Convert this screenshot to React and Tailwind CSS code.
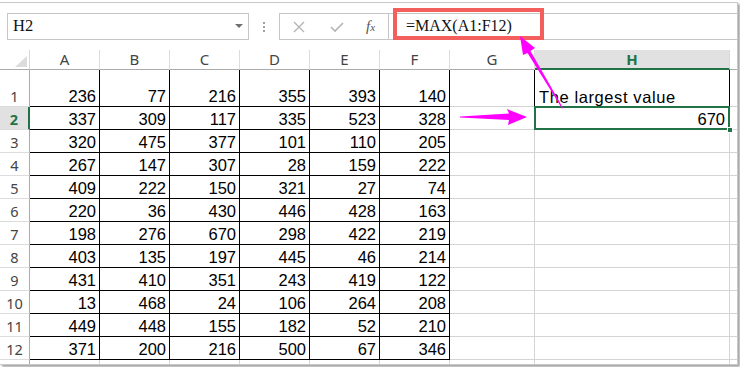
import React from "react";

const data = [
  [236, 77, 216, 355, 393, 140],
  [337, 309, 117, 335, 523, 328],
  [320, 475, 377, 101, 110, 205],
  [267, 147, 307, 28, 159, 222],
  [409, 222, 150, 321, 27, 74],
  [220, 36, 430, 446, 428, 163],
  [198, 276, 670, 298, 422, 219],
  [403, 135, 197, 445, 46, 214],
  [431, 410, 351, 243, 419, 122],
  [13, 468, 24, 106, 264, 208],
  [449, 448, 155, 182, 52, 210],
  [371, 200, 216, 500, 67, 346],
];

const cols = ["A", "B", "C", "D", "E", "F", "G", "H"];
const sans = { fontFamily: '"Liberation Sans", Arial, sans-serif' };
const ui = { fontFamily: '"Noto Sans", "Open Sans", sans-serif' };
const serif = { fontFamily: '"Liberation Serif", "Times New Roman", serif' };

function Row({ r, values }) {
  const h = r === 1 ? "h-[37px]" : "h-[23px]";
  const sel = r === 2;
  return (
    <>
      <div
        className={`${h} flex items-end justify-center border-b border-[#dcdcdc] ${
          sel
            ? "bg-[#e1e1e1] border-r-2 border-r-[#217346] text-[#217346] font-bold"
            : "border-r border-r-[#ababab] text-[#444]"
        } text-[14.5px] leading-[20px]`}
        style={ui}
      >
        {r}
      </div>
      {values.map((v, i) => (
        <div
          key={i}
          className={`${h} flex items-end justify-end pr-[3px] border-r border-b border-black text-[16.5px] leading-[20px] text-black`}
          style={sans}
        >
          {v}
        </div>
      ))}
      <div
        className={`${h} border-b border-[#d4d4d4] border-r ${
          r === 1 ? "border-r-black" : "border-r-[#d4d4d4]"
        }`}
      />
      {r === 1 ? (
        <div
          className={`${h} flex items-end pl-[4px] border-r border-r-black text-[16.5px] leading-[20px] tracking-[0.6px] text-black`}
          style={sans}
        >
          The largest value
        </div>
      ) : r === 2 ? (
        <div
          className={`${h} relative flex items-end justify-end pr-[4px] text-[16.5px] leading-[20px] text-black border-r border-b border-[#d4d4d4]`}
          style={sans}
        >
          670
          <div className="absolute left-[-1px] top-[-1px] right-[-1px] bottom-[-1px] border-2 border-[#217346]" />
          <div className="absolute right-[-4px] bottom-[-4px] w-[6px] h-[6px] bg-[#217346] border border-white" />
        </div>
      ) : (
        <div className={`${h} border-r border-b border-[#d4d4d4]`} />
      )}
      <div className={`${h} border-b border-[#d4d4d4]`} />
    </>
  );
}

export default function App() {
  return (
    <div className="relative w-[740px] h-[367px] bg-white overflow-hidden">
      <div className="mt-[2px] w-[738px] h-[363px] border-t border-r border-b border-[#c8c8c8] shadow-[2px_2px_2px_rgba(0,0,0,0.35)] bg-white flex flex-col">
        {/* formula bar area */}
        <div className="h-[47px] pt-[10px] flex items-start">
          <div className="ml-[7px] w-[242px] h-[27px] border border-[#c6c6c6] flex items-center justify-between pl-[5px] pr-[5px]">
            <span className="text-[16.5px] text-[#111] leading-none" style={serif}>
              H2
            </span>
            <svg width="8" height="5" viewBox="0 0 8 5">
              <path d="M0 0 L8 0 L4 4 Z" fill="#707070" />
            </svg>
          </div>
          <div className="w-[30px] h-[27px] flex flex-col items-center justify-center gap-[2px]">
            <div className="w-[2px] h-[2px] bg-[#a0a0a0]" />
            <div className="w-[2px] h-[2px] bg-[#a0a0a0]" />
            <div className="w-[2px] h-[2px] bg-[#a0a0a0]" />
          </div>
          <div className="w-[110px] h-[27px] border border-[#c6c6c6] flex items-center pl-[13px]">
            <svg width="12" height="12" viewBox="0 0 12 12">
              <path d="M1 1 L11 11 M11 1 L1 11" stroke="#b4b4b4" strokeWidth="1.3" />
            </svg>
            <svg width="14" height="12" viewBox="0 0 14 12" className="ml-[25px]">
              <path d="M1 6 L5 10 L13 2" stroke="#b4b4b4" strokeWidth="1.6" fill="none" />
            </svg>
            <span
              className="ml-[22px] italic text-[15px] text-[#555] leading-none"
              style={serif}
            >
              f<span className="text-[11px]">x</span>
            </span>
          </div>
          <div className="relative flex-1 h-[27px] border-t border-b border-[#c6c6c6]">
            <div
              className="absolute left-[4px] top-[-6px] w-[151px] h-[32px] border-[4px] border-[#f25f5c] flex items-center pl-[9px] pt-[3px] text-[16px] text-[#111]"
              style={serif}
            >
              =MAX(A1:F12)
            </div>
          </div>
        </div>

        {/* grid */}
        <div className="grid grid-cols-[30px_70px_70px_70px_70px_70px_70px_85px_195px_1fr]">
          {/* header row */}
          <div className="h-[20px] border-r border-b border-r-[#d8d8d8] border-b-[#ababab] relative">
            <svg width="30" height="20" className="absolute left-0 top-0">
              <path d="M15 17 L27 17 L27 6 Z" fill="#dcdcdc" />
            </svg>
          </div>
          {cols.map((c) =>
            c === "H" ? (
              <div
                key={c}
                className="h-[20px] flex items-center justify-center bg-[#e1e1e1] border-r border-r-[#d8d8d8] border-b-2 border-b-[#217346] text-[#217346] font-bold text-[15px]"
                style={ui}
              >
                {c}
              </div>
            ) : (
              <div
                key={c}
                className="h-[20px] flex items-center justify-center border-r border-b border-r-[#dcdcdc] border-b-[#ababab] text-[#444] text-[15px]"
                style={ui}
              >
                {c}
              </div>
            )
          )}
          <div className="h-[20px] border-b border-[#ababab]" />

          {data.map((row, i) => (
            <Row key={i} r={i + 1} values={row} />
          ))}

          {/* partial row */}
          <div className="h-[4px] border-r border-[#ababab]" />
          {[0, 1, 2, 3, 4, 5, 6, 7].map((i) => (
            <div key={i} className="h-[4px] border-r border-[#d4d4d4]" />
          ))}
          <div className="h-[4px]" />
        </div>
      </div>

      {/* pink arrows */}
      <svg
        className="absolute left-0 top-0 pointer-events-none"
        width="740"
        height="367"
        viewBox="0 0 740 367"
      >
        <polygon
          points="460,116.5 509,113.5 507,109 527,117 508,125 509,120 460,117.5"
          fill="#ff00ff"
        />
        <polygon
          points="563,108 530.5,51 535,48 520,36 523,55 527.5,53 562,108.5"
          fill="#ff00ff"
        />
      </svg>
    </div>
  );
}
